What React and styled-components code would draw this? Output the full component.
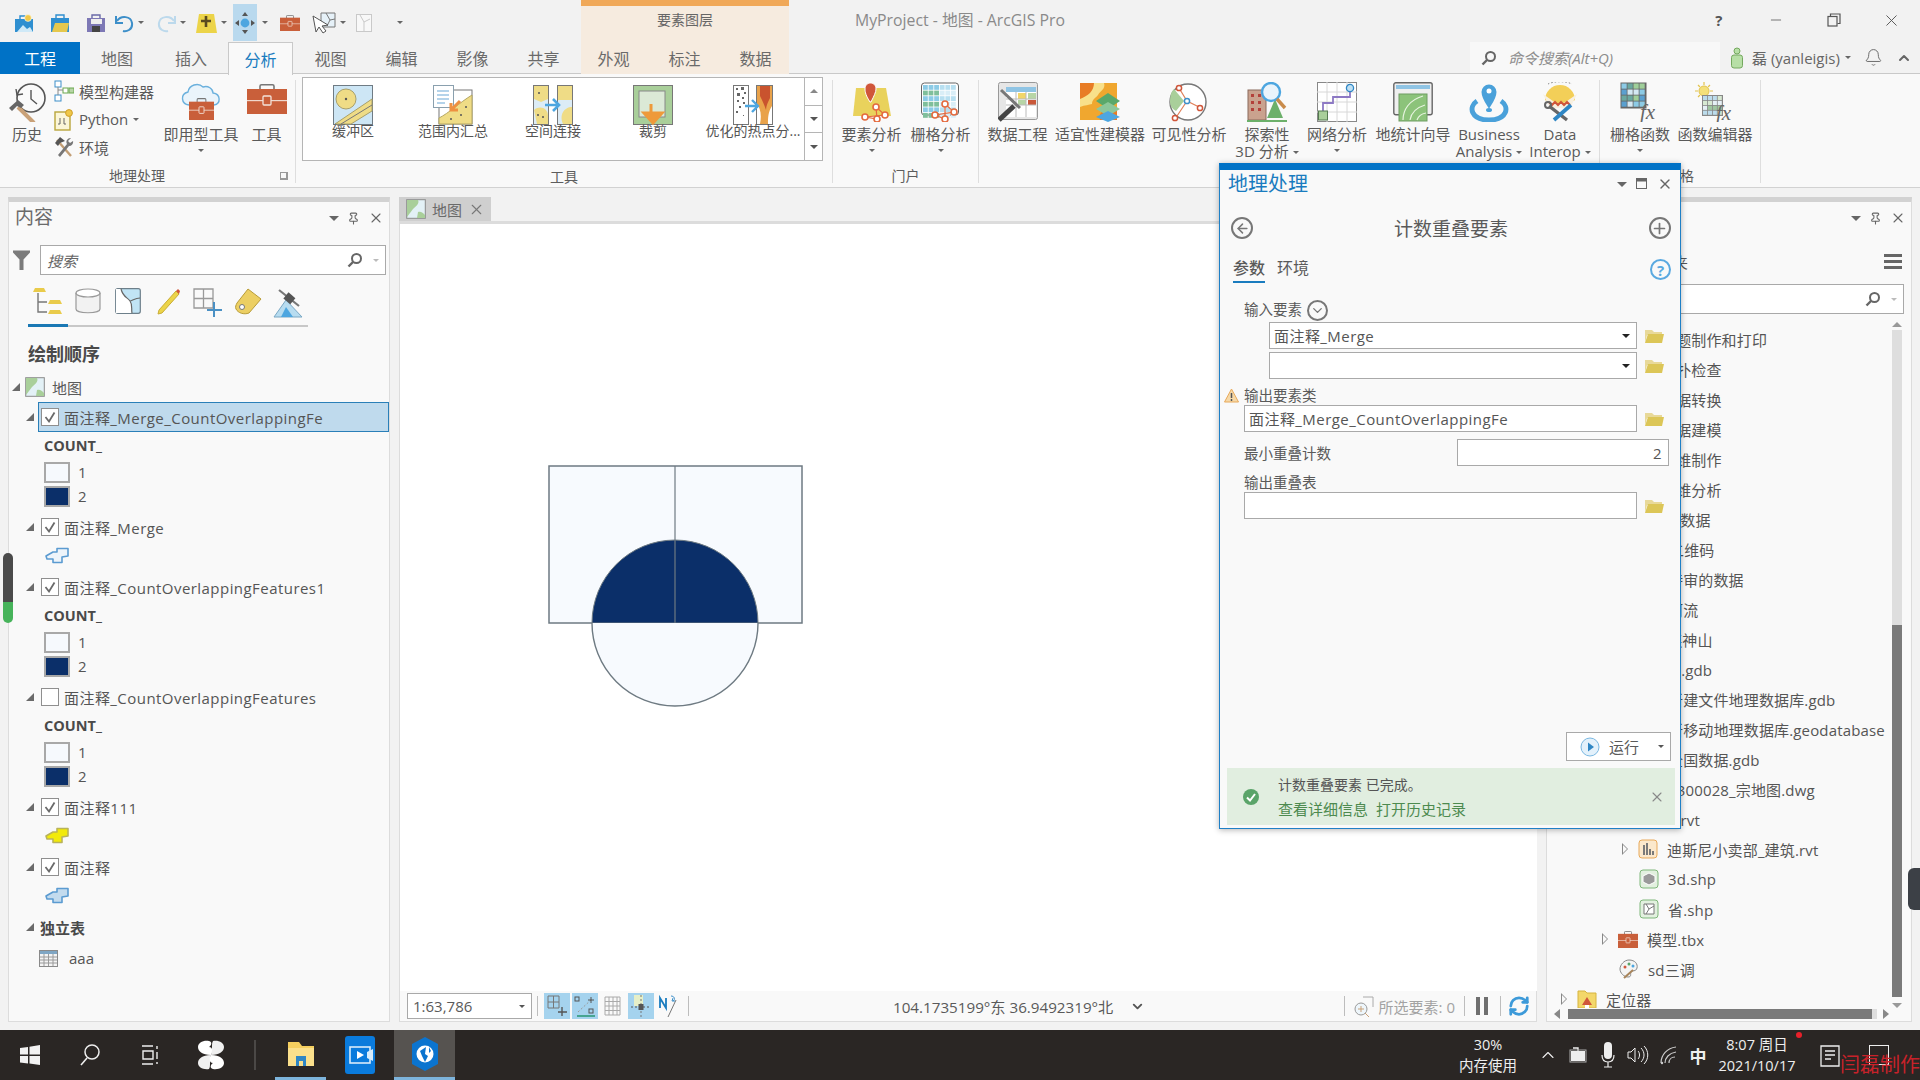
import styled, { createGlobalStyle } from 'styled-components';
import { X, Minus, Bell, ChevronUp, ChevronDown, ArrowLeft, Plus, Pin, RefreshCw } from 'lucide-react';

const FONT = `"Open Sans", "Noto Sans CJK SC", sans-serif`;

const GlobalStyle = createGlobalStyle`
  * { box-sizing: border-box; }
  html, body { margin: 0; padding: 0; }
  body { width: 1920px; height: 1080px; overflow: hidden; font-family: ${FONT}; color: #555; background: #f2f2f2; }
`;

const Page = styled.div`
  position: relative;
  width: 1920px;
  height: 1080px;
  display: flex;
  flex-direction: column;
  overflow: hidden;
  background: #f2f2f2;
`;

/* header */
const Header = styled.header`
  display: flex;
  height: 74px;
  flex: none;
`;
const HeaderLeft = styled.div`
  width: 581px;
  flex: none;
  display: flex;
  flex-direction: column;
`;
const QuickBar = styled.div`
  height: 42px;
  padding-left: 14px;
  padding-top: 4px;
  display: flex;
  align-items: flex-start;
`;
const Quick = styled.div`
  width: ${(p) => p.$w || 36}px;
  height: 37px;
  display: flex;
  align-items: center;
  justify-content: center;
  gap: 4px;
  background: ${(p) => (p.$on ? '#b9d9ee' : 'transparent')};
`;
const Caret = styled.span`
  display: inline-block;
  flex: none;
  width: 0;
  height: 0;
  border-left: ${(p) => p.$s || 3.5}px solid transparent;
  border-right: ${(p) => p.$s || 3.5}px solid transparent;
  border-top: ${(p) => p.$s || 3.5}px solid ${(p) => p.$c || '#666'};
`;
const TabRow = styled.nav`
  height: 32px;
  display: flex;
  border-bottom: 1px solid #c9c9c9;
`;
const Tab = styled.div`
  width: ${(p) => p.$w || 71}px;
  flex: none;
  height: ${(p) => (p.$active ? 33 : 32)}px;
  margin-right: ${(p) => (p.$active ? 2 : 0)}px;
  display: flex;
  align-items: center;
  justify-content: center;
  font-size: 16px;
  color: ${(p) => (p.$file ? '#fff' : p.$active ? '#1a7cbf' : '#6a6a6a')};
  background: ${(p) => (p.$file ? '#0072c6' : p.$active ? '#f9f9f9' : 'transparent')};
  border: ${(p) => (p.$active ? '1px solid #c9c9c9' : 'none')};
  border-bottom: none;
  z-index: 1;
`;
const ContextGroup = styled.div`
  width: 208px;
  flex: none;
  background: #f6ebdf;
  border-top: 6px solid #f0a858;
  display: flex;
  flex-direction: column;
`;
const ContextLabel = styled.div`
  height: 36px;
  padding-top: 2px;
  text-align: center;
  font-size: 14px;
  line-height: 24px;
  color: #666;
`;
const ContextTabs = styled.div`
  height: 32px;
  display: flex;
  margin-left: -3px;
  margin-right: 0;
`;
const HeaderRight = styled.div`
  flex: 1;
  min-width: 0;
  display: flex;
  flex-direction: column;
`;
const TitleRow = styled.div`
  height: 42px;
  display: flex;
  align-items: flex-start;
  padding-top: 8px;
`;
const AppTitle = styled.div`
  margin-left: 66px;
  width: 835px;
  flex: none;
  font-size: 15.8px;
  line-height: 24px;
  color: #8a8a8a;
`;
const WinButton = styled.div`
  width: 57.5px;
  flex: none;
  height: 24px;
  display: flex;
  align-items: center;
  justify-content: center;
  font-size: 15px;
  font-weight: 700;
  color: #555;
`;
const SearchRow = styled.div`
  height: 32px;
  display: flex;
  align-items: center;
  border-bottom: 1px solid #c9c9c9;
`;
const CommandSearch = styled.div`
  margin-left: 681px;
  width: 250px;
  flex: none;
  height: 31px;
  background: #f8f8f8;
  display: flex;
  align-items: center;
  padding-left: 11px;
  gap: 11px;
  font-size: 15px;
  font-style: italic;
  color: #8c8c8c;
`;
const UserName = styled.div`
  width: 126px;
  flex: none;
  display: flex;
  align-items: center;
  gap: 8px;
  margin-left: 10px;
  font-size: 15px;
  color: #666;
  white-space: nowrap;
`;
const UserCaret = styled(Caret)`
  margin-left: -3px;
`;
const BellBox = styled.div`
  width: 34px;
  flex: none;
  margin-right: 6px;
  display: flex;
  justify-content: center;
`;

/* ribbon */
const Ribbon = styled.section`
  height: 114px;
  flex: none;
  display: flex;
  align-items: flex-start;
  background: #f9f9f9;
  border-bottom: 1px solid #d2d2d2;
`;
const RibbonGroup = styled.div`
  position: relative;
  width: ${(p) => p.$w}px;
  height: 113px;
  display: flex;
  flex-direction: column;
`;
const GroupBody = styled.div`
  height: 92px;
  display: flex;
  align-items: flex-start;
  padding-left: ${(p) => p.$pl || 0}px;
`;
const GroupLabel = styled.div`
  height: 22px;
  line-height: 22px;
  text-align: center;
  font-size: 14px;
  color: #5d5d5d;
  padding-right: ${(p) => p.$pr || 0}px;
`;
const RibbonSep = styled.div`
  width: 1px;
  height: 103px;
  margin-top: 6px;
  background: #dedede;
  flex: none;
`;
const Launcher = styled.div`
  position: absolute;
  right: 7px;
  bottom: 7px;
  width: 8px;
  height: 8px;
  border: 1px solid #999;
  border-right-width: 2px;
  border-bottom-width: 2px;
`;
const BigButton = styled.div`
  width: ${(p) => p.$w}px;
  flex: none;
  display: flex;
  flex-direction: column;
  align-items: center;
  padding-top: 6px;
`;
const IconBox = styled.div`
  height: 46px;
  display: flex;
  align-items: flex-start;
  justify-content: center;
  padding-top: 2px;
`;
const BigLabel = styled.div`
  font-size: 15px;
  line-height: 16.5px;
  text-align: center;
  white-space: nowrap;
  color: #5a5a5a;
`;
const CaretRow = styled.div`
  height: 15px;
  display: flex;
  align-items: center;
  justify-content: center;
`;
const SmallColumn = styled.div`
  width: 110px;
  flex: none;
  display: flex;
  flex-direction: column;
  padding-top: 3px;
`;
const SmallButton = styled.div`
  height: 28px;
  display: flex;
  align-items: center;
  gap: 5px;
  font-size: 15px;
  color: #5a5a5a;
`;
const Gallery = styled.div`
  width: 521px;
  height: 84px;
  margin: 3px 0 5px 6px;
  background: #fff;
  border: 1px solid #b5b5b5;
  display: flex;
`;
const GalleryItem = styled.div`
  width: 100px;
  flex: none;
  display: flex;
  flex-direction: column;
  align-items: center;
  padding-top: 7px;
  font-size: 14px;
  line-height: 18px;
  color: #555;
`;
const GalleryText = styled.div`
  margin-top: -3px;
  white-space: nowrap;
`;
const GalleryScroll = styled.div`
  margin-left: auto;
  width: 18px;
  border-left: 1px solid #b5b5b5;
  display: flex;
  flex-direction: column;
`;
const ScrollCell = styled.div`
  flex: 1;
  display: flex;
  align-items: center;
  justify-content: center;
  border-bottom: ${(p) => (p.$last ? 'none' : '1px solid #b5b5b5')};
`;
const UpCaret = styled(Caret)`
  transform: rotate(180deg);
`;

/* panes */
const Workspace = styled.main`
  height: 842px;
  flex: none;
  display: flex;
  gap: 9px;
  padding: 9px 8px 8px 8px;
`;
const Pane = styled.div`
  width: ${(p) => p.$w}px;
  flex: none;
  height: 100%;
  position: relative;
  display: flex;
  flex-direction: column;
  background: #f9f9f9;
  border: 1px solid #dcdcdc;
  border-top: 5px solid #d2d2d2;
  overflow: hidden;
`;
const PaneHead = styled.div`
  height: 28px;
  margin-top: 2px;
  display: flex;
  align-items: center;
  padding: 0 5px 0 6px;
  gap: 8px;
`;
const PaneTitle = styled.div`
  font-size: 19px;
  line-height: 26px;
  color: #6a6a6a;
  margin-right: auto;
  margin-top: -3px;
`;
const FilterRow = styled.div`
  display: flex;
  align-items: center;
  margin-top: 13px;
  padding-left: 4px;
  gap: 10px;
`;
const SearchField = styled.div`
  width: ${(p) => p.$w}px;
  height: 30px;
  background: #fff;
  border: 1px solid #a9a9a9;
  display: flex;
  align-items: center;
  padding: 0 6px;
  font-size: 15px;
  font-style: italic;
  color: #666;
`;
const SearchSpacer = styled.span`
  margin-left: auto;
  display: flex;
  align-items: center;
  gap: 10px;
`;
const IconTabs = styled.div`
  margin: 11px 0 0 19px;
  width: 280px;
  height: 41px;
  display: flex;
  gap: 0;
  border-bottom: 2px solid #c8c8c8;
  position: relative;
`;
const IconTab = styled.div`
  width: 40.5px;
  display: flex;
  justify-content: center;
  padding-top: 2px;
  border-bottom: ${(p) => (p.$on ? '3px solid #1a78b4' : 'none')};
  margin-bottom: ${(p) => (p.$on ? -2 : 0)}px;
`;
const DrawOrder = styled.div`
  margin: 13px 0 0 19px;
  height: 28px;
  font-size: 18px;
  line-height: 28px;
  font-weight: 700;
  color: #4a4a4a;
`;
const Tree = styled.div`
  margin-top: 4px;
  display: flex;
  flex-direction: column;
`;
const MapRow = styled.div`
  height: 30px;
  display: flex;
  align-items: center;
  font-size: 15px;
  color: #5a5a5a;
`;
const MapRowText = styled.span`
  margin-left: 7px;
`;
const MapArrow = styled.span`
  display: block;
  width: 8px;
  height: 8px;
  margin: 0 3px 0 3px;
  margin-right: 5px;
  flex: none;
  background: #6a6a6a;
  clip-path: polygon(100% 0, 100% 100%, 0 100%);
`;
const Arrow = styled.span`
  display: block;
  width: 8px;
  height: 8px;
  margin: 0 3px;
  flex: none;
  background: #6a6a6a;
  clip-path: polygon(100% 0, 100% 100%, 0 100%);
`;
const LayerList = styled.div`
  display: flex;
  flex-direction: column;
  gap: 4px;
`;
const LayerBlock = styled.div`
  display: flex;
  flex-direction: column;
`;
const LayerRow = styled.div`
  height: 30px;
  display: flex;
  align-items: center;
  padding-left: 14px;
`;
const LayerBody = styled.div`
  flex: 1;
  height: 100%;
  margin-left: 1px;
  display: flex;
  align-items: center;
  gap: 5px;
  padding-left: 2px;
  font-size: 15px;
  letter-spacing: 0.45px;
  color: #555;
  background: ${(p) => (p.$sel ? '#bfdaed' : 'transparent')};
  border: 1px solid ${(p) => (p.$sel ? '#2a7fb8' : 'transparent')};
`;
const Check = styled.span`
  width: 18px;
  height: 18px;
  flex: none;
  background: #fff;
  border: 1px solid #8f8f8f;
  display: flex;
  align-items: center;
  justify-content: center;
`;
const LegendTitle = styled.div`
  height: 28px;
  padding-left: 35px;
  font-size: 14.5px;
  line-height: 28px;
  font-weight: 700;
  color: #4a4a4a;
`;
const LegendRow = styled.div`
  height: 24px;
  display: flex;
  align-items: center;
  padding-left: 35px;
  gap: 8px;
  font-size: 15px;
  color: #555;
`;
const Swatch = styled.span`
  width: 26px;
  height: 21px;
  background: ${(p) => (p.$dark ? '#0b2f69' : '#f6f9fd')};
  border: 2px solid #a8a8a8;
`;
const SymbolRow = styled.div`
  height: 26px;
  display: flex;
  align-items: center;
  padding-left: 36px;
`;
const StandaloneHead = styled.div`
  height: 30px;
  margin-top: 4px;
  display: flex;
  align-items: center;
  padding-left: 14px;
  font-size: 15px;
  font-weight: 700;
  color: #4a4a4a;
  gap: 3px;
`;
const TableRow = styled.div`
  height: 30px;
  margin-top: 1px;
  display: flex;
  align-items: center;
  padding-left: 30px;
  gap: 11px;
  font-size: 15px;
  color: #555;
`;

/* map */
const MapPane = styled.div`
  width: 1138px;
  flex: none;
  height: 100%;
  display: flex;
  flex-direction: column;
`;
const DocTabs = styled.div`
  height: 27px;
  flex: none;
  border-bottom: 3px solid #dcdcdc;
`;
const DocTab = styled.div`
  width: 92px;
  height: 24px;
  background: #cfcfcf;
  display: flex;
  align-items: center;
  padding-left: 7px;
  gap: 6px;
  font-size: 15px;
  color: #6a6a6a;
`;
const MapCanvas = styled.div`
  flex: 1;
  position: relative;
  background: #fff;
  border-left: 1px solid #dcdcdc;
`;
const MapDrawing = styled.svg`
  position: absolute;
  left: 148px;
  top: 241px;
`;
const StatusBar = styled.div`
  height: 31px;
  flex: none;
  display: flex;
  align-items: center;
  padding-left: 7px;
  background: #f9f9f9;
  border: 1px solid #dcdcdc;
  border-top: none;
`;
const ScaleBox = styled.div`
  width: 125px;
  height: 26px;
  background: #fff;
  border: 1px solid #a9a9a9;
  display: flex;
  align-items: center;
  justify-content: space-between;
  padding: 0 6px 0 5px;
  font-size: 15px;
  color: #5a5a5a;
`;
const StatusSep = styled.span`
  width: 1px;
  height: 20px;
  background: #bdbdbd;
  margin: 0 ${(p) => p.$mr ?? 6}px 0 ${(p) => p.$ml ?? 5}px;
  flex: none;
`;
const StatusTools = styled.div`
  display: flex;
  gap: 2px;
`;
const StatusTool = styled.div`
  width: 26px;
  height: 26px;
  display: flex;
  align-items: center;
  justify-content: center;
  background: ${(p) => (p.$on ? '#a5d3ee' : 'transparent')};
`;
const Coords = styled.div`
  margin-left: 204px;
  display: flex;
  align-items: center;
  gap: 17px;
  font-size: 15.2px;
  color: #5a5a5a;
  white-space: nowrap;
`;
const StatusRight = styled.div`
  margin-left: auto;
  display: flex;
  align-items: center;
  font-size: 15px;
  color: #a3a3a3;
  padding-right: 6px;
`;
const SelCount = styled.div`
  display: flex;
  align-items: center;
  gap: 4px;
  white-space: nowrap;
`;
const PauseBars = styled.span`
  width: 12px;
  height: 18px;
  border-left: 4px solid #6f6f6f;
  border-right: 4px solid #6f6f6f;
  flex: none;
`;

/* catalog */
const CatalogTabs = styled.div`
  height: 30px;
  margin-top: 14px;
  display: flex;
  align-items: center;
  justify-content: space-between;
  padding: 0 9px 0 96px;
  font-size: 15px;
`;
const Hamburger = styled.div`
  width: 18px;
  height: 15px;
  border-top: 3px solid #666;
  border-bottom: 3px solid #666;
  position: relative;
  &::after {
    content: '';
    position: absolute;
    left: 0;
    right: 0;
    top: 3px;
    height: 3px;
    background: #666;
  }
`;
const CatalogSearch = styled.div`
  margin: 8px 7px 0 6px;
`;
const CatalogBody = styled.div`
  flex: 1;
  min-height: 0;
  margin-top: 8px;
  display: flex;
`;
const CatalogTree = styled.div`
  flex: 1;
  overflow: hidden;
  padding-top: 2px;
`;
const CatalogRow = styled.div`
  height: 30px;
  display: flex;
  align-items: center;
  gap: ${(p) => p.$gap ?? 9}px;
  padding-left: ${(p) => p.$x}px;
  font-size: 15px;
  letter-spacing: 0.15px;
  color: #555;
  white-space: nowrap;
`;
const OpenArrow = styled.span`
  width: 0;
  height: 0;
  flex: none;
  border-left: 6px solid #888;
  border-top: 6px solid transparent;
  border-bottom: 6px solid transparent;
  position: relative;
  margin-right: 1px;
  &::after {
    content: '';
    position: absolute;
    left: -5px;
    top: -4px;
    border-left: 4px solid #f9f9f9;
    border-top: 4px solid transparent;
    border-bottom: 4px solid transparent;
  }
`;
const VScroll = styled.div`
  width: 10px;
  margin-right: 9px;
  flex: none;
  display: flex;
  flex-direction: column;
  align-items: center;
`;
const ScrollTrack = styled.div`
  width: 100%;
  flex: 1;
  margin: 3px 0 6px;
  background: #dedede;
  display: flex;
  flex-direction: column;
  padding-top: 295px;
`;
const ScrollThumb = styled.div`
  flex: 1;
  background: #7a7a7a;
`;
const HScroll = styled.div`
  height: 10px;
  margin: 1px 0 2px;
  display: flex;
  align-items: center;
  flex: none;
  padding-left: 7px;
`;
const HTrack = styled.div`
  margin: 0 6px 0 8px;
  width: 309px;
  height: 10px;
  background: #dedede;
  padding-right: 5px;
`;
const HThumb = styled.div`
  height: 100%;
  background: #7a7a7a;
`;
const LeftCaret = styled.span`
  width: 0;
  height: 0;
  border-right: 6px solid #888;
  border-top: 5px solid transparent;
  border-bottom: 5px solid transparent;
`;
const RightCaret = styled.span`
  width: 0;
  height: 0;
  border-left: 6px solid #888;
  border-top: 5px solid transparent;
  border-bottom: 5px solid transparent;
`;

/* floating geoprocessing window */
const GeoWindow = styled.aside`
  position: absolute;
  left: 1219px;
  top: 163px;
  width: 462px;
  height: 666px;
  display: flex;
  flex-direction: column;
  background: #f9f9f9;
  border: 1px solid #1f80c6;
  border-top: 7px solid #0072c6;
  box-shadow: 0 1px 6px rgba(0, 0, 0, 0.3);
`;
const GeoHead = styled.div`
  height: 28px;
  flex: none;
  display: flex;
  align-items: center;
  padding: 0 7px 0 8px;
  gap: 9px;
`;
const GeoTitle = styled.div`
  font-size: 20px;
  line-height: 28px;
  color: #1a7cbf;
  margin-right: auto;
`;
const GeoNav = styled.div`
  height: 40px;
  margin-top: 10px;
  flex: none;
  display: flex;
  align-items: center;
  justify-content: space-between;
  padding: 0 9px 0 11px;
`;
const ToolTitle = styled.div`
  font-size: 19px;
  color: #5a5a5a;
`;
const CircleBtn = styled.span`
  width: ${(p) => p.$s || 22}px;
  height: ${(p) => p.$s || 22}px;
  flex: none;
  border-radius: 50%;
  border: 2px solid ${(p) => p.$c || '#777'};
  color: ${(p) => p.$c || '#777'};
  display: flex;
  align-items: center;
  justify-content: center;
  font-size: 15px;
  font-weight: 700;
`;
const GeoTabs = styled.div`
  height: 35px;
  flex: none;
  display: flex;
  align-items: flex-start;
  padding: 7px 9px 0 13px;
  gap: 12px;
`;
const GeoTab = styled.div`
  height: 28px;
  line-height: 26px;
  font-size: 16px;
  color: #5a5a5a;
  font-weight: ${(p) => (p.$on ? 500 : 400)};
  border-bottom: ${(p) => (p.$on ? '2px solid #1a7cbf' : 'none')};
`;
const HelpBox = styled.div`
  margin-left: auto;
  padding-top: 4px;
`;
const Form = styled.div`
  padding: 16px 0 0 24px;
  display: flex;
  flex-direction: column;
  flex: 1;
`;
const FieldLabel = styled.div`
  position: relative;
  height: 22px;
  line-height: 22px;
  margin-top: ${(p) => p.$mt || 0}px;
  display: flex;
  align-items: center;
  gap: 5px;
  font-size: 14.5px;
  color: #5a5a5a;
`;
const WarnIcon = styled.span`
  position: absolute;
  left: -20px;
  top: 3px;
  display: flex;
`;
const FieldLine = styled.div`
  display: flex;
  align-items: center;
  margin-top: ${(p) => p.$mt || 0}px;
  padding-left: ${(p) => p.$pl || 0}px;
`;
const Field = styled.div`
  width: ${(p) => p.$w || 393}px;
  height: 27px;
  background: #fff;
  border: 1px solid #a9a9a9;
  display: flex;
  align-items: center;
  justify-content: ${(p) => (p.$num ? 'flex-end' : 'space-between')};
  padding: 0 6px 0 4px;
  font-size: 15px;
  letter-spacing: 0.45px;
  color: #555;
`;
const FolderBox = styled.span`
  margin-left: 7px;
  display: flex;
`;
const NumberLine = styled.div`
  display: flex;
  align-items: center;
  justify-content: space-between;
  margin-top: 7px;
  height: 27px;
  padding-right: 11px;
  font-size: 14.5px;
  color: #5a5a5a;
`;
const FormSpacer = styled.div`
  flex: 1;
`;
const RunButton = styled.div`
  align-self: flex-end;
  margin-right: 9px;
  width: 105px;
  height: 29px;
  flex: none;
  background: #fff;
  border: 1px solid #a9a9a9;
  display: flex;
  align-items: center;
  padding: 0 6px 0 13px;
  font-size: 15px;
  color: #5a5a5a;
  gap: 9px;
`;
const RunCaret = styled(Caret)`
  margin-left: auto;
`;
const SuccessBar = styled.div`
  flex: none;
  height: 57px;
  margin: 7px 5px 3px 7px;
  background: #e1eee0;
  display: flex;
  align-items: center;
  padding: 0 10px 0 16px;
`;
const SuccessText = styled.div`
  margin-left: 19px;
  flex: 1;
  display: flex;
  flex-direction: column;
  gap: 4px;
  font-size: 14px;
  line-height: 20px;
  color: #555;
`;
const SuccessLinks = styled.div`
  display: flex;
  gap: 8px;
  color: #4d8a4f;
  font-size: 15px;
`;

/* taskbar */
const Taskbar = styled.footer`
  height: 50px;
  flex: none;
  display: flex;
  align-items: center;
  background: #2a2624;
  color: #eee;
`;
const TaskItem = styled.div`
  width: ${(p) => p.$w || 60}px;
  height: 50px;
  flex: none;
  margin-left: ${(p) => p.$ml || 0}px;
  display: flex;
  align-items: center;
  justify-content: center;
  background: ${(p) => (p.$on ? '#565350' : 'transparent')};
  border-bottom: ${(p) => (p.$open ? '3px solid #7db4dc' : 'none')};
`;
const TaskDivider = styled.span`
  width: 2px;
  height: 30px;
  background: #4b4846;
  margin-left: 12px;
  margin-right: 20px;
`;
const Tray = styled.div`
  margin-left: auto;
  display: flex;
  align-items: center;
  padding-right: 21px;
`;
const TrayText = styled.div`
  width: ${(p) => p.$w}px;
  margin-right: ${(p) => p.$mr || 0}px;
  text-align: center;
  font-size: 14.5px;
  line-height: 21px;
  color: #eee;
`;
const TrayIcon = styled.div`
  width: ${(p) => p.$w || 30}px;
  display: flex;
  justify-content: center;
  font-size: 17px;
  font-weight: 700;
`;
const RedDot = styled.span`
  position: absolute;
  left: 1796px;
  top: 1032px;
  width: 6px;
  height: 6px;
  border-radius: 50%;
  background: #e8202a;
`;
const Watermark = styled.div`
  position: absolute;
  right: 0;
  bottom: 1px;
  font-size: 20px;
  line-height: 28px;
  color: #c8222a;
  white-space: nowrap;
`;
const EdgeHandle = styled.div`
  position: absolute;
  left: 3px;
  top: 553px;
  width: 10px;
  height: 70px;
  border-radius: 5px;
  background: linear-gradient(#4a4a4a 0 70%, #46b35a 70% 100%);
`;
const EdgeHandleRight = styled.div`
  position: absolute;
  right: 0;
  top: 868px;
  width: 12px;
  height: 42px;
  border-radius: 6px 0 0 6px;
  background: #3c4046;
`;
const Flip = styled.span`
  display: flex;
  transform: scaleX(-1);
`;

/* drawings */
const Svg = ({ w = 40, h = 40, children }) => (
  <svg width={w} height={h} viewBox={`0 0 ${w} ${h}`} fill="none">{children}</svg>
);

const Lens = ({ s = 16, c = '#666' }) => (
  <svg width={s} height={s} viewBox="0 0 16 16" fill="none">
    <circle cx="9.5" cy="6.5" r="4.5" stroke={c} strokeWidth="2" />
    <path d="M6 10 L1.5 14.5" stroke={c} strokeWidth="2.4" />
  </svg>
);

const ToolboxShape = ({ x = 0, y = 0, w = 40, h = 30 }) => (
  <g transform={`translate(${x} ${y}) scale(${w / 40} ${h / 30})`}>
    <rect x="13" y="0.8" width="14" height="7" rx="1.5" stroke="#777" strokeWidth="1.6" />
    <rect y="5" width="40" height="25" fill="#c95f3a" />
    <rect y="16" width="40" height="1.2" fill="#f0d8cc" />
    <rect x="16" y="12" width="8" height="9" rx="1" fill="#c95f3a" stroke="#f3e3da" strokeWidth="1.3" />
  </g>
);

const HistoryIcon = () => (
  <Svg>
    <circle cx="24" cy="16" r="14" stroke="#555" strokeWidth="1.6" fill="#fafafa" />
    <path d="M24 8v9l6 5" stroke="#555" strokeWidth="1.4" />
    <path d="M9 7l1 6 6-1" stroke="#555" strokeWidth="1.4" />
    <path d="M11 25L27 41" stroke="#c9a178" strokeWidth="4" />
    <path d="M2 26l9-8 6 5-3 3-4-2-5 5z" fill="#666" />
  </Svg>
);
const CloudToolboxIcon = () => (
  <Svg h={40}>
    <path d="M8 23c-8-1-9-11-1-13 1-7 10-10 15-5 5-2 10 2 10 6 8 1 8 11 1 12" fill="#eaf4fb" stroke="#6cb1dd" strokeWidth="1.4" />
    <ToolboxShape x={8} y={16} w={25} h={22} />
  </Svg>
);
const ToolboxIcon = () => (
  <Svg h={34}><ToolboxShape y={2} w={40} h={30} /></Svg>
);
const BufferIcon = () => (
  <Svg>
    <rect x=".5" y=".5" width="39" height="39" fill="#cde6f5" stroke="#6f7b84" />
    <circle cx="13" cy="14" r="10" fill="#efdc86" stroke="#a9a06a" />
    <circle cx="13" cy="14" r="1.2" fill="#555" />
    <path d="M2 39 39 14V26L18 39Z" fill="#efdc86" stroke="#a9a06a" />
    <path d="M8 39 39 20" stroke="#777" />
  </Svg>
);
const SummarizeIcon = () => (
  <Svg>
    <rect x="6" y="5" width="33" height="34" fill="#fff" stroke="#777" />
    <path d="M6 39V33C16 28 26 18 39 10V39Z" fill="#efdc86" stroke="#b5a763" />
    <rect x=".5" y=".5" width="20" height="22" fill="#fff" stroke="#8aa0ae" />
    <path d="M4 6h12M4 10h12M4 14h12M4 18h8" stroke="#6aa8d5" strokeWidth="1.2" />
    <path d="M27 16 18 25M18 18v7h7" stroke="#ee9040" strokeWidth="3" />
    <circle cx="18" cy="34" r="1" fill="#555" /><circle cx="28" cy="30" r="1" fill="#555" /><circle cx="33" cy="22" r="1" fill="#555" />
  </Svg>
);
const JoinIcon = () => (
  <Svg>
    <rect x=".5" y=".5" width="15" height="39" fill="#dcecf6" stroke="#777" />
    <rect x="24.5" y=".5" width="15" height="39" fill="#dcecf6" stroke="#777" />
    <path d="M1 1h14v13l-7 3-7-3z" fill="#efdc86" />
    <path d="M1 25c6-5 14-2 14 6v8H4z" fill="#efdc86" />
    <path d="M25 1h14v14H25zM39 22c-8 0-13 8-9 17h9z" fill="#efdc86" />
    <circle cx="6" cy="8" r="1" fill="#555" /><circle cx="10" cy="32" r="1" fill="#555" /><circle cx="5" cy="30" r="1" fill="#555" />
    <path d="M12 20h14M20 14l6 6-6 6" stroke="#4da6e0" strokeWidth="2.6" />
  </Svg>
);
const ClipIcon = () => (
  <Svg>
    <rect x=".5" y=".5" width="39" height="39" fill="#a9cf9a" stroke="#777" />
    <rect x="6" y="6" width="26" height="26" fill="#dbe9d6" stroke="#888" />
    <path d="M18 19v14M11 28l9 10 9-10z" fill="#ee9a3a" stroke="#ee9a3a" strokeWidth="3" />
  </Svg>
);
const HotspotIcon = () => (
  <Svg>
    <rect x=".5" y=".5" width="15" height="39" fill="#fff" stroke="#777" />
    <path d="M3 3h2v2H3zM8 2h3v3H8zM11 7h2v2h-2zM4 8h3v3H4zM9 12h2v2H9zM4 15h2v2H4zM10 17h2v2h-2zM6 21h2v2H6zM3 26h2v2H3zM10 30h1v1h-1z" fill="#666" />
    <rect x="23.5" y=".5" width="16" height="39" fill="#fff" stroke="#777" />
    <path d="M24 1h15v20c-4 6-4 12-4 18h-8c2-10 0-16-3-20z" fill="#e9a24a" />
    <path d="M27 1h10v12c-2 4-4 8-4 12-2-6-4-10-6-14z" fill="#c9532e" />
    <path d="M12 21h13M19 15l6 6-6 6" stroke="#4da6e0" strokeWidth="2.4" />
  </Svg>
);
const Nodes = ({ pts, c = '#e46a3e', line = '#e46a3e' }) => (
  <g>
    <path d={`M${pts.map((p) => p.join(' ')).join('L')}Z`} stroke={line} strokeWidth="1.2" />
    {pts.map(([x, y]) => <circle key={`${x}-${y}`} cx={x} cy={y} r="3" fill="#fff" stroke={c} strokeWidth="1.6" />)}
  </g>
);
const FeatureIcon = () => (
  <Svg>
    <path d="M4 6 34 6 39 34 1 34Z" fill="#e9d25c" />
    <path d="M17 22c-4-6-5-10-5-13 0-8 11-8 11 0 0 3-2 7-5 13z" fill="#d0563a" stroke="#fff" transform="translate(1 -2)" />
    <Nodes pts={[[24, 25], [33, 33], [13, 35], [25, 37]]} />
  </Svg>
);
const RasterGrid = ({ x, y, n, cell, colors }) => (
  <g>
    {Array.from({ length: n * n }).map((_, i) => (
      <rect
        key={i}
        x={x + (i % n) * cell}
        y={y + Math.floor(i / n) * cell}
        width={cell - 0.8}
        height={cell - 0.8}
        fill={colors[(i * 7 + (i % 3)) % colors.length]}
      />
    ))}
  </g>
);
const RasterIcon = () => (
  <Svg>
    <rect x=".5" y="1" width="37" height="32" rx="3" fill="#fff" stroke="#666" />
    <RasterGrid x={2} y={3} n={6} cell={5.6} colors={['#8ccbe6', '#b7dff0', '#7fbf9b', '#d9eef7']} />
    <Nodes pts={[[24, 22], [33, 30], [14, 33], [24, 37]]} />
  </Svg>
);
const EngineeringIcon = () => (
  <Svg>
    <rect x=".5" y=".5" width="39" height="37" rx="2" fill="#e6e6e6" stroke="#999" />
    <rect x="8" y="5" width="30" height="30" fill="#fff" />
    <path d="M8 5h30v5H8z" fill="#8fc4e4" />
    <path d="M20 11h8v6h-8z" fill="#f1d66a" /><path d="M30 18h8v5h-8z" fill="#c9583a" /><path d="M20 18h8v5h-8zM30 11h8v6h-8z" fill="#b7d5a6" />
    <path d="M8 17h30M8 23h30M18 10v25M28 10v25" stroke="#bbb" />
    <path d="M3 8 22 26" stroke="#777" strokeWidth="3" />
    <path d="M1 38 16 24" stroke="#444" strokeWidth="5" />
  </Svg>
);
const SuitabilityIcon = () => (
  <Svg>
    <rect width="37" height="37" y="1" fill="#f0a72f" />
    <path d="M0 1h14c4 6-2 10-6 14-3 3-6 5-8 6zM37 38H20c-2-8 5-12 12-12h5z" fill="#e87c25" />
    <path d="M14 1h10c2 6-4 8-6 12-2 3-6 4-6 9-3 1-7 1-12 3v-8c8-3 14-8 14-16z" fill="#f8e08a" />
    <path d="M28 11 40 19 28 27 16 19z" fill="#5aa86a" />
    <path d="M28 20 40 27 28 34 16 27z" fill="#8cc79a" />
    <path d="M28 29 40 35 28 40 16 35z" fill="#4da6e0" />
  </Svg>
);
const VisibilityIcon = () => (
  <Svg>
    <circle cx="19" cy="20" r="18" stroke="#777" strokeWidth="1.4" fill="#fff" />
    <path d="M1 20c0-6 1-10 4-13l10 12-8 10c-4-2-6-5-6-9z" fill="#a9cf9a" />
    <path d="M10 6 18 19 32 26M18 19 8 34" stroke="#e0805a" strokeWidth="1.2" />
    <circle cx="10" cy="6" r="2.6" fill="#fff" stroke="#d0563a" strokeWidth="1.5" />
    <circle cx="18" cy="19" r="2.6" fill="#fff" stroke="#3d8fc9" strokeWidth="1.5" />
    <circle cx="31" cy="26" r="2.6" fill="#fff" stroke="#d0563a" strokeWidth="1.5" />
    <circle cx="6" cy="36" r="2.6" fill="#fff" stroke="#d0563a" strokeWidth="1.5" />
  </Svg>
);
const ExploreIcon = () => (
  <Svg>
    <rect x="1" y="8" width="18" height="30" fill="#caa28e" stroke="#8a6a5c" />
    <path d="M4 12h3v3H4zM11 12h3v3h-3zM4 19h3v3H4zM11 19h3v3h-3zM4 26h3v3H4zM11 26h3v3h-3z" fill="#b3413a" />
    <path d="M28 17 36 36H20z" fill="#6cb06a" />
    <path d="M0 39h40" stroke="#6cb06a" strokeWidth="2" />
    <circle cx="24" cy="10" r="9" fill="#eaf4fb" stroke="#4da6e0" strokeWidth="2.4" />
    <path d="M30 17 38 26" stroke="#c98b4b" strokeWidth="3.4" />
  </Svg>
);
const NetworkIcon = () => (
  <Svg>
    <rect x=".5" y=".5" width="39" height="39" fill="#fff" stroke="#888" />
    <path d="M0 10h40M0 20h40M0 30h40M10 0v40M20 0v40M30 0v40" stroke="#d8d8d8" />
    <path d="M6 33V21h10v-6h17V7" stroke="#8d79c4" strokeWidth="1.8" />
    <rect x="1.5" y="29" width="9" height="9" fill="#a9cf9a" stroke="#557a50" />
    <circle cx="33" cy="6" r="3.6" fill="#bfe0f3" stroke="#2f86c4" strokeWidth="1.3" />
  </Svg>
);
const GeostatIcon = () => (
  <Svg>
    <rect x=".8" y=".8" width="38.4" height="32" rx="2" fill="#efefef" stroke="#666" strokeWidth="1.4" />
    <rect x="3" y="3" width="34" height="4" fill="#8fc4e4" />
    <rect x="6" y="12" width="28" height="27" fill="#8cc37a" stroke="#6f9d62" />
    <path d="M10 38c0-10 6-20 20-24M17 38c1-6 5-12 15-15M24 38c1-3 3-6 9-7" stroke="#e8f4e0" strokeWidth="1.2" />
  </Svg>
);
const BusinessIcon = () => (
  <Svg>
    <path d="M20 24c-4-6-6-10-6-14a6 6 0 0 1 12 0c0 4-2 8-6 14z" fill="#4aa1da" stroke="#4aa1da" strokeWidth="3" />
    <circle cx="20" cy="9" r="2.5" fill="#fff" />
    <path d="M8 19c-9 6-6 19 12 19s21-13 12-19" stroke="#4aa1da" strokeWidth="5" />
    <ellipse cx="20" cy="28" rx="3" ry="2" fill="#4aa1da" />
  </Svg>
);
const InteropIcon = () => (
  <Svg>
    <path d="M5 18A15 15 0 0 1 35 18C30 22 10 22 5 18Z" fill="#f3cf58" />
    <path d="M3 12 20 24 37 12 30 26H10z" fill="#f8f0e0" />
    <path d="M9 20l3 3 3-3 3 3 3-3 3 3 3-3 3 3" stroke="#d0563a" strokeWidth="2" />
    <path d="M8 2c6-3 18-3 24 0" stroke="#888" strokeDasharray="1.5 2" />
    <path d="M9 24 27 38" stroke="#666" strokeWidth="3.4" />
    <path d="M31 23 14 38" stroke="#2f86c4" strokeWidth="3.8" />
    <circle cx="8" cy="23" r="3" stroke="#666" strokeWidth="2" />
  </Svg>
);
const RasterFnIcon = () => (
  <Svg>
    <rect x=".5" y=".5" width="26" height="26" fill="#666" />
    <RasterGrid x={1.5} y={1.5} n={4} cell={6} colors={['#8ccbe6', '#9fcf9a', '#d4e9f4', '#6aa8a0', '#5aa0d0']} />
    <text x="20" y="37" fontFamily="Liberation Serif, serif" fontStyle="italic" fontSize="21" fill="#666">fx</text>
  </Svg>
);
const FnEditorIcon = () => (
  <Svg>
    <circle cx="9" cy="9" r="5" fill="#f4e07a" stroke="#e3c44f" />
    <path d="M9 0v3M9 15v3M0 9h3M15 9h3M3 3l2 2M13 13l2 2M15 3l-2 2M3 15l2-2" stroke="#e3c44f" strokeWidth="1.2" />
    <rect x="7" y="13" width="21" height="21" fill="#888" />
    <RasterGrid x={8} y={14} n={4} cell={4.9} colors={['#bcdcec', '#d7e9d2', '#e6f0f6', '#9fc6a0']} />
    <text x="21" y="38" fontFamily="Liberation Serif, serif" fontStyle="italic" fontSize="21" fill="#666">fx</text>
  </Svg>
);
const ModelIcon = () => (
  <Svg w={20} h={22}>
    <rect x="1" y="1" width="6" height="6" fill="#fff" stroke="#3d8fc9" />
    <rect x="1" y="15" width="6" height="6" fill="#fff" stroke="#3d8fc9" />
    <rect x="9" y="8" width="5" height="5" fill="#fff" stroke="#6aa84f" />
    <rect x="15" y="8" width="5" height="5" fill="#b7d5a6" stroke="#6aa84f" />
    <path d="M4 7v8M4 10h5" stroke="#888" />
  </Svg>
);
const PythonIcon = () => (
  <Svg w={20} h={24}>
    <rect x="1" y="5" width="15" height="18" fill="#fbf6d8" stroke="#b9a63c" strokeWidth="1.4" />
    <path d="M6 11v6h-2M10 11v6h2" stroke="#666" />
    <circle cx="15" cy="6" r="3.4" fill="#f0c848" stroke="#cf9f2b" />
  </Svg>
);
const EnvIcon = () => (
  <Svg w={20} h={22}>
    <path d="M3 4 17 20" stroke="#c29e75" strokeWidth="2.4" />
    <path d="M1 7l5-6 5 4-5 2-2 3z" fill="#555" />
    <path d="M17 2a4 4 0 0 0-4 6L4 19l2 2 9-11a4 4 0 0 0 4-5l-3 2-2-2z" fill="#777" />
  </Svg>
);

/* quick access icons */
const QNew = () => (
  <Svg w={20} h={20}>
    <path d="M1 6h18v13H1z" fill="#2f8fd0" />
    <path d="M6 6V3h8v3" stroke="#2f8fd0" strokeWidth="1.4" />
    <path d="M3 19l6-7 4 4 3-2 3 5z" fill="#cfe9f7" />
    <circle cx="14" cy="5" r="3.4" fill="#f0c848" stroke="#fff" strokeWidth=".6" />
  </Svg>
);
const QOpen = () => (
  <Svg w={20} h={20}>
    <path d="M6 5V2h8v3" stroke="#2f8fd0" strokeWidth="1.4" />
    <path d="M1 5h18v14H1z" fill="#2f8fd0" />
    <path d="M2 19l3-9h14l-2 9z" fill="#e5c84d" />
  </Svg>
);
const QSave = () => (
  <Svg w={20} h={20}>
    <path d="M6 5V2h8v3" stroke="#6a6aa8" strokeWidth="1.4" />
    <path d="M1 5h18v14H1z" fill="#7d78b5" />
    <rect x="5" y="6" width="11" height="5" fill="#eee" />
    <rect x="6" y="13" width="8" height="6" fill="#444" />
  </Svg>
);
const QUndo = ({ c = '#3d8fc9' }) => (
  <Svg w={19} h={20}>
    <path d="M2 8c4-6 14-5 15 2s-6 9-9 8" stroke={c} strokeWidth="2" />
    <path d="M1 3v7h7" stroke={c} strokeWidth="2" />
  </Svg>
);
const QAddData = () => (
  <Svg w={21} h={20}>
    <path d="M3 1h15l3 19H0z" fill="#ecd449" />
    <path d="M10 3v11M5 8h10" stroke="#5a4b20" strokeWidth="2.6" />
  </Svg>
);
const QExplore = () => (
  <Svg w={20} h={22}>
    <circle cx="10" cy="11" r="4.4" fill="#4da6e0" />
    <path d="M10 0l3 4H7zM10 22l-3-4h6zM0 11l4-3v6zM20 11l-4 3V8z" fill="#555" />
  </Svg>
);
const QTool = () => (
  <Svg w={20} h={16}><ToolboxShape w={20} h={16} /></Svg>
);
const QSelect = () => (
  <Svg w={24} h={22}>
    <path d="M9 1h14v14H9z" fill="#e6f1f8" stroke="#777" />
    <path d="M14 1l4 7-3 6M18 8l5-1" stroke="#777" />
    <path d="M1 4l3 16 3-5 4 6 3-2-4-5 6-1z" fill="#fff" stroke="#555" />
  </Svg>
);
const QMapFrame = () => (
  <Svg w={16} h={18}>
    <rect x=".5" y=".5" width="15" height="17" fill="#f8f8f8" stroke="#c9c9c9" />
    <path d="M4 1l4 7v9M8 8l6-3" stroke="#c9c9c9" />
  </Svg>
);
const UserIcon = () => (
  <Svg w={14} h={22}>
    <circle cx="7" cy="4" r="3" fill="#b7dfa6" stroke="#74a85e" />
    <rect x="1.5" y="8" width="11" height="13" rx="2.5" fill="#b7dfa6" stroke="#74a85e" />
  </Svg>
);
const RestoreIcon = () => (
  <Svg w={14} h={14}>
    <rect x="1" y="3.5" width="9" height="9.5" stroke="#555" strokeWidth="1.2" />
    <path d="M3.5 3V1H13V10.5H10.5" stroke="#555" strokeWidth="1.2" />
  </Svg>
);

/* panel icons */
const FilterIcon = () => (
  <Svg w={17} h={20}>
    <path d="M0 .5h17v2L10.5 9.5V20h-4V9.5L0 2.5z" fill="#7b7b7b" />
  </Svg>
);
const TocOrder = () => (
  <Svg w={30} h={30}>
    <path d="M2 0h9l2 4H0z" fill="#e9cb4b" /><path d="M17 12h10l2 4H15z" fill="#e9cb4b" /><path d="M17 22h10l2 4H15z" fill="#e9cb4b" />
    <path d="M5 5v19h9M5 14h9" stroke="#777" strokeWidth="1.4" />
  </Svg>
);
const TocSource = () => (
  <Svg w={26} h={26}>
    <path d="M1 5v16c0 5 24 5 24 0V5" fill="#f2f2f2" stroke="#999" strokeWidth="1.2" />
    <ellipse cx="13" cy="5" rx="12" ry="4" fill="#fff" stroke="#999" strokeWidth="1.2" />
  </Svg>
);
const TocSelect = () => (
  <Svg w={26} h={26}>
    <rect x=".7" y=".7" width="24.6" height="24.6" rx="2" fill="#c1e4f5" stroke="#6d7f8a" strokeWidth="1.2" />
    <path d="M1 1h5c2 8 6 8 9 12s1 8 2 12H1z" fill="#fff" />
    <path d="M6 1c2 8 6 8 9 12s1 8 2 12M15 13c3-1 6-3 10-3" stroke="#666" strokeWidth="1.2" fill="none" />
  </Svg>
);
const TocEdit = () => (
  <Svg w={26} h={28}>
    <path d="M4 22 21 3l3 3L7 25l-4 1z" fill="#ecd449" stroke="#c9ad36" />
    <path d="M21 3l3 3 1-3-2-2z" fill="#d0563a" />
  </Svg>
);
const TocSnap = () => (
  <Svg w={30} h={30}>
    <path d="M1 1h19v19H1zM1 10.5h19M10.5 1v19" stroke="#999" strokeWidth="1.3" fill="none" />
    <path d="M21 14v15M14 22h15" stroke="#4a90c4" strokeWidth="2" />
  </Svg>
);
const TocLabel = () => (
  <Svg w={28} h={28}>
    <path d="M14 1l13 10-12 14c-5 2-11 0-13-4-1-2 0-4 1-6z" fill="#eccf63" stroke="#b89c38" />
    <circle cx="8" cy="19" r="2.5" fill="#fff" stroke="#777" />
  </Svg>
);
const TocImagery = () => (
  <Svg w={30} h={30}>
    <path d="M1 29 13 12l16 17z" fill="#b7dcf0" stroke="#7aa8c4" />
    <path d="M8 29 13 19l7 10z" fill="#4da6e0" />
    <path d="M6 2l20 16" stroke="#777" strokeWidth="2.2" />
    <rect x="12" y="6" width="9" height="8" fill="#555" transform="rotate(40 16 10)" />
  </Svg>
);
const MapThumb = ({ s = 20 }) => (
  <svg width={s} height={s} viewBox="0 0 20 20">
    <rect x=".7" y=".7" width="18.6" height="18.6" fill="#e3f1f6" stroke="#8a8a8a" />
    <path d="M1 1h11c2 4-3 7-5 9-2 3-4 5-6 8z" fill="#a9cf9a" />
    <path d="M12 13c3-1 5 1 7 3v3h-8z" fill="#a9cf9a" />
  </svg>
);
const Poly = ({ fill, stroke }) => (
  <Svg w={24} h={17}>
    <path d="M1 9 8 5h4V1.5h11V9l-6 1v5.5H8V12H2z" fill={fill} stroke={stroke} strokeWidth="1.6" strokeLinejoin="round" />
  </Svg>
);
const TableIcon = () => (
  <Svg w={19} h={17}>
    <rect x=".5" y=".5" width="18" height="16" fill="#f4f4f4" stroke="#8a8a8a" />
    <rect x="1" y="1" width="17" height="3" fill="#7fa6c4" />
    <path d="M1 7h17M1 10h17M1 13h17M5 4v12M9.500 4v12M14 4v12" stroke="#9a9a9a" />
  </Svg>
);
const Tick = () => (
  <Svg w={12} h={12}>
    <path d="M1.500 6 5 10.500 10.500 1.500" stroke="#6a6a6a" strokeWidth="1.8" />
  </Svg>
);
const Folder = () => (
  <Svg w={20} h={16}>
    <path d="M1 2h7l2 2h8v3H3l-2 8z" fill="#e8d999" />
    <path d="M1 15 4 6h16l-2 9z" fill="#dcc657" />
  </Svg>
);
const Warning = () => (
  <Svg w={15} h={15}>
    <path d="M7.500 1 14.500 14H.5z" fill="#f6d9a8" stroke="#e8a95a" />
    <path d="M7.500 5v5M7.500 11v2" stroke="#555" strokeWidth="1.5" />
  </Svg>
);
const RunIcon = () => (
  <Svg w={20} h={20}>
    <circle cx="10" cy="10" r="9" fill="#e3f1fb" stroke="#7ab8e2" />
    <path d="M8 5.500 14 10 8 14.500z" fill="#2f86c4" />
  </Svg>
);
const SuccessIcon = () => (
  <Svg w={16} h={16}>
    <circle cx="8" cy="8" r="8" fill="#5aa469" />
    <path d="M4 8.500 7 11.500 12 5" stroke="#fff" strokeWidth="2" />
  </Svg>
);
const RvtIcon = () => (
  <Svg w={20} h={20}>
    <rect x="1" y="1" width="18" height="18" rx="3" fill="#fbe8cc" stroke="#e8a95a" />
    <path d="M5 16V6h2v10zM8 16V4h2v12zM11 16v-6h2v6zM14 16v-4h2v4z" fill="#7a7a7a" />
  </Svg>
);
const ShpIcon = ({ cube }) => (
  <Svg w={20} h={20}>
    <rect x="1" y="1" width="18" height="18" rx="3" fill="#e2f0df" stroke="#7fb77a" />
    {cube
      ? <path d="M10 4l6 3v6l-6 3-6-3V7z" fill="#9a9a9a" stroke="#fff" />
      : <path d="M5 5h10v10H5zM7 5l3 5-3 5M10 10l5-3" fill="#fff" stroke="#777" />}
  </Svg>
);
const PaletteIcon = () => (
  <Svg w={20} h={20}>
    <path d="M10 1c6 0 9 4 8 8s-5 2-6 4 1 5-3 5-8-4-8-8 4-9 9-9z" fill="#f4f4f4" stroke="#888" />
    <circle cx="6" cy="8" r="1.5" fill="#d0563a" /><circle cx="10" cy="5" r="1.500" fill="#5aa469" /><circle cx="14" cy="7" r="1.500" fill="#4da6e0" />
    <path d="M14 11 5 19" stroke="#a8845a" strokeWidth="2" />
  </Svg>
);
const LocatorIcon = () => (
  <Svg w={20} h={20}>
    <path d="M1 2h7l2 2h9v15H1z" fill="#f3d76a" stroke="#d6b43f" />
    <path d="M10 8l5 8H5z" fill="#d0563a" />
    <path d="M8 16v3h4v-3" fill="#fff" />
  </Svg>
);

/* taskbar icons */
const WinLogo = () => (
  <Svg w={20} h={20}>
    <path d="M0 3l8-1v7.500H0zM9.500 1.800 20 0v9.500H9.500zM0 11h8v7.500l-8-1zM9.500 11H20v9L9.500 18.500z" fill="#f2f2f2" />
  </Svg>
);
const TaskSearch = () => (
  <Svg w={22} h={22}>
    <circle cx="13" cy="8" r="7" stroke="#eee" strokeWidth="1.5" />
    <path d="M8 14 2 21" stroke="#eee" strokeWidth="1.6" />
  </Svg>
);
const TaskView = () => (
  <Svg w={20} h={20}>
    <path d="M2 1h11M2 19h11M3 6h10v8H3zM17 1v3M17 7v7M17 17v2" stroke="#eee" strokeWidth="1.4" />
  </Svg>
);
const SwirlLogo = () => (
  <Svg w={28} h={30}>
    <path d="M14 15C5 15 1 11 1 7s5-7 11-6c4 1 2 5 0 6 4 0 4 5 2 8z" fill="#fff" />
    <path d="M14 15c9 0 13-4 13-8s-5-7-11-6c-2 3 0 8-2 14z" fill="#f0f0f0" />
    <path d="M14 15C5 15 1 19 1 23s5 7 11 6c2-3 0-8 2-14z" fill="#f0f0f0" />
    <path d="M14 15c9 0 13 4 13 8s-5 7-11 6c-4-1-2-5 0-6-4 0-4-5-2-8z" fill="#fff" />
  </Svg>
);
const ExplorerIcon = () => (
  <Svg w={28} h={26}>
    <path d="M1 1h11l3 4h12v20H1z" fill="#f5cf5f" />
    <path d="M1 7h26v18H1z" fill="#fbe08c" />
    <path d="M9 25V15h10v10h-3v-5h-4v5z" fill="#2f86c4" />
  </Svg>
);
const VideoIcon = () => (
  <Svg w={30} h={38}>
    <rect width="30" height="38" rx="3" fill="#0a7bdc" />
    <rect x="5" y="11" width="20" height="16" stroke="#d7ecfb" strokeWidth="1.6" />
    <path d="M12 15l7 4-7 4z" fill="#fff" />
    <path d="M22 16l6-3v12l-6-3z" fill="#d7ecfb" />
  </Svg>
);
const ArcIcon = () => (
  <Svg w={28} h={34}>
    <path d="M14 0 27 7v20l-13 7-13-7V7z" fill="#0b74cf" />
    <circle cx="14" cy="17" r="8.500" fill="#fff" />
    <path d="M9 14l6-4-1 7 3 2-3 6-3-6zM18 10l2 4-2 2z" fill="#0b74cf" />
  </Svg>
);
const BatteryIcon = () => (
  <Svg w={18} h={18}>
    <rect x="2" y="5" width="14" height="10" fill="#eee" />
    <path d="M4 2h5v3" stroke="#eee" strokeWidth="1.4" />
    <rect x="1" y="4" width="16" height="12" stroke="#aaa" />
  </Svg>
);
const MicIcon = () => (
  <Svg w={14} h={26}>
    <rect x="3" y="0" width="8" height="17" rx="4" fill="#eee" />
    <path d="M1 13c0 5 3 7 6 7s6-2 6-7M7 20v5M3 25h8" stroke="#eee" strokeWidth="1.2" />
  </Svg>
);
const SpeakerIcon = () => (
  <Svg w={22} h={20}>
    <path d="M1 7h3l4-4v14l-4-4H1z" stroke="#eee" />
    <path d="M11 6c2 2 2 6 0 8M14 3c4 4 4 10 0 14M17 1c5 5 5 13 0 18" stroke="#eee" />
  </Svg>
);
const WifiIcon = () => (
  <Svg w={20} h={20}>
    <path d="M3 18C3 10 9 3 18 2M7 18c0-5 4-10 11-11M11 18c0-3 2-6 6-6" stroke="#ccc" strokeWidth="1.2" />
    <circle cx="4" cy="18" r="1.200" fill="#ccc" />
  </Svg>
);
const NotifyIcon = () => (
  <Svg w={20} h={24}>
    <path d="M1 3h18v20H1z" stroke="#eee" strokeWidth="1.300" />
    <path d="M5 8h10M5 12h10M5 16h6" stroke="#eee" strokeWidth="1.300" />
  </Svg>
);

/* data */
const headTabs = ['地图', '插入'];
const headTabsAfter = ['视图', '编辑', '影像', '共享'];

const galleryItems = [
  ['缓冲区', <BufferIcon key="a" />],
  ['范围内汇总', <SummarizeIcon key="b" />],
  ['空间连接', <JoinIcon key="c" />],
  ['裁剪', <ClipIcon key="d" />],
  ['优化的热点分...', <HotspotIcon key="e" />],
];

const layers = [
  { name: '面注释_Merge_CountOverlappingFe', on: true, sel: true, legend: 'count' },
  { name: '面注释_Merge', on: true, fill: '#eef4fa', stroke: '#5b9bd1' },
  { name: '面注释_CountOverlappingFeatures1', on: true, legend: 'count' },
  { name: '面注释_CountOverlappingFeatures', on: false, legend: 'count' },
  { name: '面注释111', on: true, fill: '#f2ea0a', stroke: '#b9b35a' },
  { name: '面注释', on: true, fill: '#c3dbee', stroke: '#5b9bd1' },
];

const catalogRows = [
  ['专题制作和打印', 114], ['拓扑检查', 114], ['数据转换', 114], ['数据建模', 114],
  ['三维制作', 114], ['三维分析', 114], ['影像数据', 103], ['二维码', 122],
  ['待审的数据', 121], ['河流', 121], ['祁连神山', 105], ['新.gdb', 119],
  ['新建文件地理数据库.gdb', 121], ['新移动地理数据库.geodatabase', 121], ['全国数据.gdb', 121],
  ['1300028_宗地图.dwg', 121], ['迪斯尼.rvt', 84],
];

function Layer({ layer }) {
  return (
    <LayerBlock>
      <LayerRow>
        <Arrow />
        <LayerBody $sel={layer.sel}>
          <Check>{layer.on && <Tick />}</Check>
          {layer.name}
        </LayerBody>
      </LayerRow>
      {layer.legend === 'count' ? (
        <>
          <LegendTitle>COUNT_</LegendTitle>
          <LegendRow><Swatch />1</LegendRow>
          <LegendRow><Swatch $dark />2</LegendRow>
        </>
      ) : (
        <SymbolRow><Poly fill={layer.fill} stroke={layer.stroke} /></SymbolRow>
      )}
    </LayerBlock>
  );
}

function BigBtn({ w, label, caret, children }) {
  return (
    <BigButton $w={w}>
      <IconBox>{children}</IconBox>
      <BigLabel>{label}</BigLabel>
      {caret && <CaretRow><Caret /></CaretRow>}
    </BigButton>
  );
}

const InlineCaret = styled(Caret)`
  vertical-align: middle;
`;

function CaretLabel({ text }) {
  return <>{text} <InlineCaret /></>;
}

export default function App() {
  return (
    <Page>
      <GlobalStyle />
      <Header>
        <HeaderLeft>
          <QuickBar>
            <Quick $w={20}><QNew /></Quick>
            <Quick $w={52}><QOpen /></Quick>
            <Quick $w={20}><QSave /></Quick>
            <Quick $w={46}><QUndo /><Caret /></Quick>
            <Quick $w={38}><Flip><QUndo c="#bcd9ec" /></Flip><Caret /></Quick>
            <Quick $w={43}><QAddData /><Caret /></Quick>
            <Quick $w={24} $on><QExplore /></Quick>
            <Quick $w={15}><Caret /></Quick>
            <Quick $w={36}><QTool /></Quick>
            <Quick $w={42}><QSelect /><Caret /></Quick>
            <Quick $w={28}><QMapFrame /></Quick>
            <Quick $w={44}><Caret /></Quick>
          </QuickBar>
          <TabRow>
            <Tab $file $w={80}>工程</Tab>
            {headTabs.map((t) => <Tab key={t} $w={74}>{t}</Tab>)}
            <Tab $active $w={65}>分析</Tab>
            {headTabsAfter.map((t) => <Tab key={t}>{t}</Tab>)}
          </TabRow>
        </HeaderLeft>
        <ContextGroup>
          <ContextLabel>要素图层</ContextLabel>
          <ContextTabs>
            <Tab>外观</Tab><Tab>标注</Tab><Tab>数据</Tab>
          </ContextTabs>
        </ContextGroup>
        <HeaderRight>
          <TitleRow>
            <AppTitle>MyProject - 地图 - ArcGIS Pro</AppTitle>
            <WinButton>?</WinButton>
            <WinButton><Minus size={16} strokeWidth={1.2} /></WinButton>
            <WinButton><RestoreIcon /></WinButton>
            <WinButton><X size={19} strokeWidth={1.2} /></WinButton>
          </TitleRow>
          <SearchRow>
            <CommandSearch><Lens />命令搜索(Alt+Q)</CommandSearch>
            <UserName><UserIcon />磊 (yanleigis)<UserCaret /></UserName>
            <BellBox><Bell size={19} strokeWidth={1.2} color="#666" /></BellBox>
            <ChevronUp size={16} strokeWidth={3} color="#666" />
          </SearchRow>
        </HeaderRight>
      </Header>

      <Ribbon>
        <RibbonGroup $w={295}>
          <GroupBody>
            <BigBtn w={54} label="历史"><HistoryIcon /></BigBtn>
            <SmallColumn>
              <SmallButton><ModelIcon />模型构建器</SmallButton>
              <SmallButton><PythonIcon />Python <Caret /></SmallButton>
              <SmallButton><EnvIcon />环境</SmallButton>
            </SmallColumn>
            <BigBtn w={74} label="即用型工具" caret><CloudToolboxIcon /></BigBtn>
            <BigBtn w={57} label="工具"><ToolboxIcon /></BigBtn>
          </GroupBody>
          <GroupLabel $pr={21}>地理处理</GroupLabel>
          <Launcher />
        </RibbonGroup>
        <RibbonSep />
        <RibbonGroup $w={536}>
          <GroupBody>
            <Gallery>
              {galleryItems.map(([text, icon]) => (
                <GalleryItem key={text}>{icon}<GalleryText>{text}</GalleryText></GalleryItem>
              ))}
              <GalleryScroll>
                <ScrollCell><UpCaret $c="#888" $s={4} /></ScrollCell>
                <ScrollCell><Caret $c="#555" $s={4} /></ScrollCell>
                <ScrollCell $last><Caret $c="#555" $s={4} /></ScrollCell>
              </GalleryScroll>
            </Gallery>
          </GroupBody>
          <GroupLabel>工具</GroupLabel>
        </RibbonGroup>
        <RibbonSep />
        <RibbonGroup $w={145}>
          <GroupBody $pl={4}>
            <BigBtn w={69} label="要素分析" caret><FeatureIcon /></BigBtn>
            <BigBtn w={69} label="栅格分析" caret><RasterIcon /></BigBtn>
          </GroupBody>
          <GroupLabel>门户</GroupLabel>
        </RibbonGroup>
        <RibbonSep />
        <RibbonGroup $w={620}>
          <GroupBody>
            <BigBtn w={77} label="数据工程"><EngineeringIcon /></BigBtn>
            <BigBtn w={88} label="适宜性建模器"><SuitabilityIcon /></BigBtn>
            <BigBtn w={90} label="可见性分析"><VisibilityIcon /></BigBtn>
            <BigBtn w={66} label={<>探索性<br /><CaretLabel text="3D 分析" /></>}><ExploreIcon /></BigBtn>
            <BigBtn w={74} label="网络分析" caret><NetworkIcon /></BigBtn>
            <BigBtn w={78} label="地统计向导"><GeostatIcon /></BigBtn>
            <BigBtn w={74} label={<>Business<br /><CaretLabel text="Analysis" /></>}><BusinessIcon /></BigBtn>
            <BigBtn w={68} label={<>Data<br /><CaretLabel text="Interop" /></>}><InteropIcon /></BigBtn>
          </GroupBody>
        </RibbonGroup>
        <RibbonSep />
        <RibbonGroup $w={160}>
          <GroupBody>
            <BigBtn w={80} label="栅格函数" caret><RasterFnIcon /></BigBtn>
            <BigBtn w={70} label="函数编辑器"><FnEditorIcon /></BigBtn>
          </GroupBody>
          <GroupLabel>栅格</GroupLabel>
        </RibbonGroup>
        <RibbonSep />
      </Ribbon>

      <Workspace>
        <Pane $w={382}>
          <PaneHead>
            <PaneTitle>内容</PaneTitle>
            <Caret $s={5} />
            <Pin size={13} color="#666" strokeWidth={2} />
            <X size={16} color="#666" strokeWidth={1.6} />
          </PaneHead>
          <FilterRow>
            <FilterIcon />
            <SearchField $w={346}>搜索<SearchSpacer><Lens /><Caret $c="#bbb" /></SearchSpacer></SearchField>
          </FilterRow>
          <IconTabs>
            <IconTab $on><TocOrder /></IconTab>
            <IconTab><TocSource /></IconTab>
            <IconTab><TocSelect /></IconTab>
            <IconTab><TocEdit /></IconTab>
            <IconTab><TocSnap /></IconTab>
            <IconTab><TocLabel /></IconTab>
            <IconTab><TocImagery /></IconTab>
          </IconTabs>
          <DrawOrder>绘制顺序</DrawOrder>
          <Tree>
            <MapRow><MapArrow /><MapThumb /><MapRowText>地图</MapRowText></MapRow>
            <LayerList>
              {layers.map((l) => <Layer key={l.name} layer={l} />)}
            </LayerList>
            <StandaloneHead><Arrow />独立表</StandaloneHead>
            <TableRow><TableIcon />aaa</TableRow>
          </Tree>
        </Pane>

        <MapPane>
          <DocTabs>
            <DocTab><MapThumb />地图<X size={17} color="#777" strokeWidth={1.6} /></DocTab>
          </DocTabs>
          <MapCanvas>
            <MapDrawing width="270" height="252" viewBox="0 0 270 252" fill="none">
              <rect x="1" y="1" width="253" height="157" fill="#f7fafe" stroke="#6e7a82" strokeWidth="1.5" />
              <path d="M44 158 A83 83 0 0 1 210 158Z" fill="#0b2f69" stroke="#6e7a82" strokeWidth="1" />
              <path d="M44 158 A83 83 0 0 0 210 158" fill="#f7fafe" stroke="#6e7a82" strokeWidth="1.4" />
              <path d="M127 1V158" stroke="#6e7a82" strokeWidth="1.2" />
            </MapDrawing>
          </MapCanvas>
          <StatusBar>
            <ScaleBox>1:63,786<Caret $c="#555" /></ScaleBox>
            <StatusSep />
            <StatusTools>
              <StatusTool $on><Svg w={22} h={22}><path d="M2 1h11v12H2zM2 7h11M7.500 1v12" stroke="#777" /><path d="M16 12v9M12 17h9" stroke="#555" strokeWidth="1.4" /></Svg></StatusTool>
              <StatusTool $on><Svg w={22} h={22}><path d="M3 21h18" stroke="#2f9a7a" strokeWidth="1.6" /><path d="M4 17 18 4" stroke="#999" strokeDasharray="2 2" /><rect x="1" y="2" width="4" height="4" stroke="#555" /><rect x="15" y="14" width="4" height="4" stroke="#555" /><path d="M17 2v6M14 5h6" stroke="#555" /></Svg></StatusTool>
              <StatusTool><Svg w={18} h={20}><path d="M1 1h15v18H1zM1 5.500h15M1 10h15M1 14.500h15M5 1v18M9 1v18M13 1v18" stroke="#aaa" /></Svg></StatusTool>
              <StatusTool $on><Svg w={22} h={24}><rect x="4" y="1" width="9" height="11" fill="#e6efc8" /><path d="M11 1v22" stroke="#777" strokeDasharray="2 2" /><path d="M1 13h20" stroke="#555" strokeDasharray="2 2" /><rect x="8.500" y="10" width="5" height="6" fill="#555" /></Svg></StatusTool>
              <StatusTool><Svg w={20} h={24}><path d="M1 14V4l6 10V4" stroke="#1a7cbf" strokeWidth="1.8" /><path d="M9 23 17 6" stroke="#777" /><path d="M12 2c3 0 5 3 2 5M16 7l-3 0 1-3" stroke="#3d8fc9" /></Svg></StatusTool>
            </StatusTools>
            <StatusSep $ml={6} $mr={0} />
            <Coords>104.1735199°东 36.9492319°北 <ChevronDown size={15} strokeWidth={3} color="#555" /></Coords>
            <StatusRight>
              <StatusSep $ml={0} $mr={8} />
              <SelCount>
                <Svg w={22} h={22}><circle cx="8" cy="14" r="6" fill="#eef6fb" stroke="#999" /><path d="M8 11v6M5 14h6M12 18l4 4" stroke="#c9a178" /><path d="M10 2h10v10" stroke="#aaa" /></Svg>
                所选要素: 0
              </SelCount>
              <StatusSep $ml={9} $mr={11} />
              <PauseBars />
              <StatusSep $ml={12} $mr={7} />
              <RefreshCw size={22} color="#3d9ad9" strokeWidth={3} />
            </StatusRight>
          </StatusBar>
        </MapPane>

        <Pane $w={366}>
          <PaneHead>
            <PaneTitle>目录</PaneTitle>
            <Caret $s={5} />
            <Pin size={13} color="#666" strokeWidth={2} />
            <X size={16} color="#666" strokeWidth={1.6} />
          </PaneHead>
          <CatalogTabs>
            <span>文件夹</span>
            <Hamburger />
          </CatalogTabs>
          <CatalogSearch>
            <SearchField $w={351}><SearchSpacer><Lens /><Caret $c="#bbb" /></SearchSpacer></SearchField>
          </CatalogSearch>
          <CatalogBody>
            <CatalogTree>
              {catalogRows.map(([t, x]) => <CatalogRow key={t} $x={x}>{t}</CatalogRow>)}
              <CatalogRow $x={75}><OpenArrow /><RvtIcon />迪斯尼小卖部_建筑.rvt</CatalogRow>
              <CatalogRow $x={92}><ShpIcon cube />3d.shp</CatalogRow>
              <CatalogRow $x={92}><ShpIcon />省.shp</CatalogRow>
              <CatalogRow $x={55}><OpenArrow /><Svg w={20} h={17}><ToolboxShape w={20} h={17} /></Svg>模型.tbx</CatalogRow>
              <CatalogRow $x={72}><PaletteIcon />sd三调</CatalogRow>
              <CatalogRow $x={14}><OpenArrow /><LocatorIcon />定位器</CatalogRow>
            </CatalogTree>
            <VScroll>
              <UpCaret $c="#999" $s={5} />
              <ScrollTrack><ScrollThumb /></ScrollTrack>
              <Caret $c="#999" $s={5} />
            </VScroll>
          </CatalogBody>
          <HScroll>
            <LeftCaret />
            <HTrack><HThumb /></HTrack>
            <RightCaret />
          </HScroll>
        </Pane>
      </Workspace>

      <Taskbar>
        <TaskItem><WinLogo /></TaskItem>
        <TaskItem><TaskSearch /></TaskItem>
        <TaskItem><TaskView /></TaskItem>
        <TaskItem $w={62}><SwirlLogo /></TaskItem>
        <TaskDivider />
        <TaskItem $w={51} $ml={-1} $open><ExplorerIcon /></TaskItem>
        <TaskItem $w={68}><VideoIcon /></TaskItem>
        <TaskItem $w={61} $on $open><ArcIcon /></TaskItem>
        <Tray>
          <TrayText $w={60} $mr={15}>30%<br />内存使用</TrayText>
          <TrayIcon><ChevronUp size={20} strokeWidth={1.3} color="#eee" /></TrayIcon>
          <TrayIcon><BatteryIcon /></TrayIcon>
          <TrayIcon><MicIcon /></TrayIcon>
          <TrayIcon><SpeakerIcon /></TrayIcon>
          <TrayIcon><WifiIcon /></TrayIcon>
          <TrayIcon>中</TrayIcon>
          <TrayText $w={88}>8:07 周日<br />2021/10/17</TrayText>
          <TrayIcon $w={58}><NotifyIcon /></TrayIcon>
          <TrayIcon $w={40}><Svg w={20} h={20}><rect x=".5" y=".5" width="19" height="19" stroke="#eee" /></Svg></TrayIcon>
        </Tray>
      </Taskbar>

      <GeoWindow>
        <GeoHead>
          <GeoTitle>地理处理</GeoTitle>
          <Caret $s={5} />
          <Svg w={12} h={12}><rect x=".5" y=".5" width="10" height="10" stroke="#666" /><rect x="1" y="1" width="9" height="2.500" fill="#666" /></Svg>
          <X size={16} color="#666" strokeWidth={2} />
        </GeoHead>
        <GeoNav>
          <CircleBtn><ArrowLeft size={15} strokeWidth={2.4} /></CircleBtn>
          <ToolTitle>计数重叠要素</ToolTitle>
          <CircleBtn><Plus size={17} strokeWidth={2.4} /></CircleBtn>
        </GeoNav>
        <GeoTabs>
          <GeoTab $on>参数</GeoTab>
          <GeoTab>环境</GeoTab>
          <HelpBox><CircleBtn $c="#5aa9e0" $s={21}>?</CircleBtn></HelpBox>
        </GeoTabs>
        <Form>
          <FieldLabel>输入要素<CircleBtn $s={21}><ChevronDown size={15} strokeWidth={2.2} /></CircleBtn></FieldLabel>
          <FieldLine $pl={25} $mt={1}>
            <Field $w={368}>面注释_Merge<Caret $c="#222" $s={4} /></Field>
            <FolderBox><Folder /></FolderBox>
          </FieldLine>
          <FieldLine $pl={25} $mt={3}>
            <Field $w={368}><span /><Caret $c="#222" $s={4} /></Field>
            <FolderBox><Folder /></FolderBox>
          </FieldLine>
          <FieldLabel $mt={6}><WarnIcon><Warning /></WarnIcon>输出要素类</FieldLabel>
          <FieldLine $mt={-2}>
            <Field>面注释_Merge_CountOverlappingFe</Field>
            <FolderBox><Folder /></FolderBox>
          </FieldLine>
          <NumberLine>最小重叠计数<Field $w={212} $num>2</Field></NumberLine>
          <FieldLabel $mt={6}>输出重叠表</FieldLabel>
          <FieldLine $mt={-2}>
            <Field />
            <FolderBox><Folder /></FolderBox>
          </FieldLine>
          <FormSpacer />
        </Form>
        <RunButton><RunIcon />运行<RunCaret $c="#555" $s={3} /></RunButton>
        <SuccessBar>
          <SuccessIcon />
          <SuccessText>
            计数重叠要素 已完成。
            <SuccessLinks><span>查看详细信息</span><span>打开历史记录</span></SuccessLinks>
          </SuccessText>
          <X size={16} color="#888" strokeWidth={1.6} />
        </SuccessBar>
      </GeoWindow>

      <EdgeHandle />
      <EdgeHandleRight />
      <RedDot />
      <Watermark>闫磊制作</Watermark>
    </Page>
  );
}
